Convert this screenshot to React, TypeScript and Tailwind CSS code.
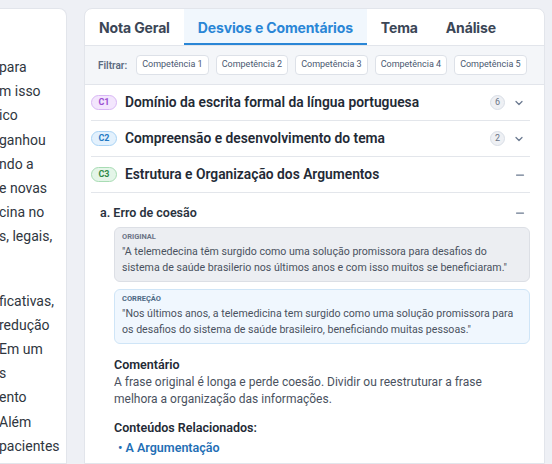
import { ChevronDown, Minus } from "lucide-react";

const essayLines = [
  "para",
  "m isso",
  "ico",
  "ganhou",
  "ndo a",
  "e novas",
  "cina no",
  "s, legais,",
  "",
  "ficativas,",
  "redução",
  "Em um",
  "s",
  "ento",
  "Além",
  "pacientes",
];

const filters = ["Competência 1", "Competência 2", "Competência 3", "Competência 4", "Competência 5"];

const tabs = [
  { label: "Nota Geral", active: false },
  { label: "Desvios e Comentários", active: true },
  { label: "Tema", active: false },
  { label: "Análise", active: false },
];

function CompBadge({ code, tone }: { code: string; tone: "purple" | "blue" | "green" }) {
  const tones = {
    purple: "border-[#d9b8f5] bg-[#f3e6fd] text-[#9a4fd1]",
    blue: "border-[#a9d3f5] bg-[#e3f1fd] text-[#2479c4]",
    green: "border-[#a8dcb4] bg-[#e4f5e8] text-[#2f8a47]",
  };
  return (
    <span
      className={`flex h-[15px] w-[26px] flex-none items-center justify-center rounded-full border text-[9px] font-bold ${tones[tone]}`}
    >
      {code}
    </span>
  );
}

function CompRow({
  code,
  tone,
  title,
  count,
  open,
}: {
  code: string;
  tone: "purple" | "blue" | "green";
  title: string;
  count?: number;
  open?: boolean;
}) {
  return (
    <div className="flex h-9 items-center gap-2 border-b border-[#e3e6eb]">
      <CompBadge code={code} tone={tone} />
      <span className="flex-1 text-[13.8px] font-semibold text-[#232a35]">{title}</span>
      {open ? (
        <Minus size={12} strokeWidth={2.5} className="mr-[4px] text-[#6b7a90]" />
      ) : (
        <div className="flex items-center gap-[8px] pr-[5px]">
          <span className="flex h-[15px] w-[15px] items-center justify-center rounded-full border border-[#d9dee6] bg-[#eef0f4] text-[9px] text-[#6b7486]">
            {count}
          </span>
          <ChevronDown size={12} strokeWidth={2.5} className="text-[#6b7a90]" />
        </div>
      )}
    </div>
  );
}

export default function App() {
  return (
    <div
      className="flex h-[464px] w-[552px] gap-[17px] overflow-hidden bg-[#eef0f5] pt-2"
      style={{ fontFamily: "Roboto, 'Noto Sans', sans-serif" }}
    >
      {/* essay text, scrolled off to the left */}
      <div className="w-[67px] flex-none overflow-hidden rounded-tr-lg border border-l-0 border-[#e2e5eb] bg-white pt-[46px]">
        {essayLines.map((line, i) => (
          <div
            key={i}
            className={`-ml-px h-[24.2px] whitespace-nowrap text-[14px] leading-[24px] text-[#2f3640] ${
              i === 9 ? "mt-[16px]" : ""
            }`}
          >
            {line}
          </div>
        ))}
      </div>

      <div className="w-[461px] flex-none overflow-hidden rounded-t-lg border border-[#e2e5eb] bg-white">
        {/* tabs */}
        <div className="flex h-[37px] border-b border-[#e2e5eb]" style={{ fontFamily: "Inter, sans-serif" }}>
          {tabs.map((t) => (
            <div
              key={t.label}
              className={`flex items-center px-[14px] text-[14px] font-bold tracking-[-0.01em] ${
                t.active
                  ? "border-b-2 border-[#2a86d6] bg-[#f1f7fd] pt-[2px] text-[#2a86d6]"
                  : "text-[#3b4656]"
              }`}
            >
              {t.label}
            </div>
          ))}
        </div>

        {/* filter chips */}
        <div className="flex h-[39px] items-center gap-[7px] border-b border-[#e2e5eb] bg-[#f4f6f9] px-[13px]">
          <span className="mr-[2px] text-[10px] font-semibold text-[#5b6a80]">Filtrar:</span>
          {filters.map((f) => (
            <span
              key={f}
              className="flex h-[20px] items-center rounded border border-[#dde1e8] bg-white px-[5px] text-[9px] text-[#4a5870]"
            >
              {f}
            </span>
          ))}
        </div>

        <div className="pl-[6px] pr-[14px]">
          <CompRow code="C1" tone="purple" title="Domínio da escrita formal da língua portuguesa" count={6} />
          <CompRow code="C2" tone="blue" title="Compreensão e desenvolvimento do tema" count={2} />
          <CompRow code="C3" tone="green" title="Estrutura e Organização dos Argumentos" open />

          <div className="pt-[11px]">
            <div className="flex h-[18px] items-center justify-between pl-[9px]">
              <span className="text-[12.5px] font-semibold text-[#2a323e]">a. Erro de coesão</span>
              <Minus size={12} strokeWidth={2.5} className="mr-[4px] text-[#6b7a90]" />
            </div>

            <div className="ml-[23px] mt-[5px] flex flex-col gap-[7px]">
              <div className="rounded-md border border-[#dcdfe5] bg-[#eceef2] px-[7px] pb-[5px] pt-[4px]">
                <div className="text-[7.5px] font-bold uppercase leading-[10px] text-[#6b7486]">Original</div>
                <p className="mt-[2px] text-[10.6px] leading-[16px] text-[#4a5260]">
                  "A telemedecina têm surgido como uma solução promissora para desafios do sistema de saúde brasilerio nos
                  últimos anos e com isso muitos se beneficiaram."
                </p>
              </div>
              <div className="rounded-md border border-[#cfe5f7] bg-[#f0f7fe] px-[7px] pb-[5px] pt-[4px]">
                <div className="text-[7.5px] font-bold uppercase leading-[10px] text-[#4e6a85]">Correção</div>
                <p className="mt-[2px] text-[10.6px] leading-[16px] text-[#4a5260]">
                  "Nos últimos anos, a telemedicina tem surgido como uma solução promissora para os desafios do sistema
                  de saúde brasileiro, beneficiando muitas pessoas."
                </p>
              </div>

              <div className="mt-[5px] pr-[20px]">
                <div className="text-[12.5px] font-semibold leading-[18px] text-[#232a35]">Comentário</div>
                <p className="text-[12px] leading-[17px] text-[#4a5260]">
                  A frase original é longa e perde coesão. Dividir ou reestruturar a frase melhora a organização das
                  informações.
                </p>
              </div>

              <div className="mt-[4px]">
                <div className="text-[12.5px] font-semibold leading-[18px] text-[#232a35]">Conteúdos Relacionados:</div>
                <div className="mt-[2px] pl-[4px] text-[12.5px] font-semibold leading-[18px] text-[#1f6fb5]">
                  • A Argumentação
                </div>
              </div>
            </div>
          </div>
        </div>
      </div>
    </div>
  );
}
